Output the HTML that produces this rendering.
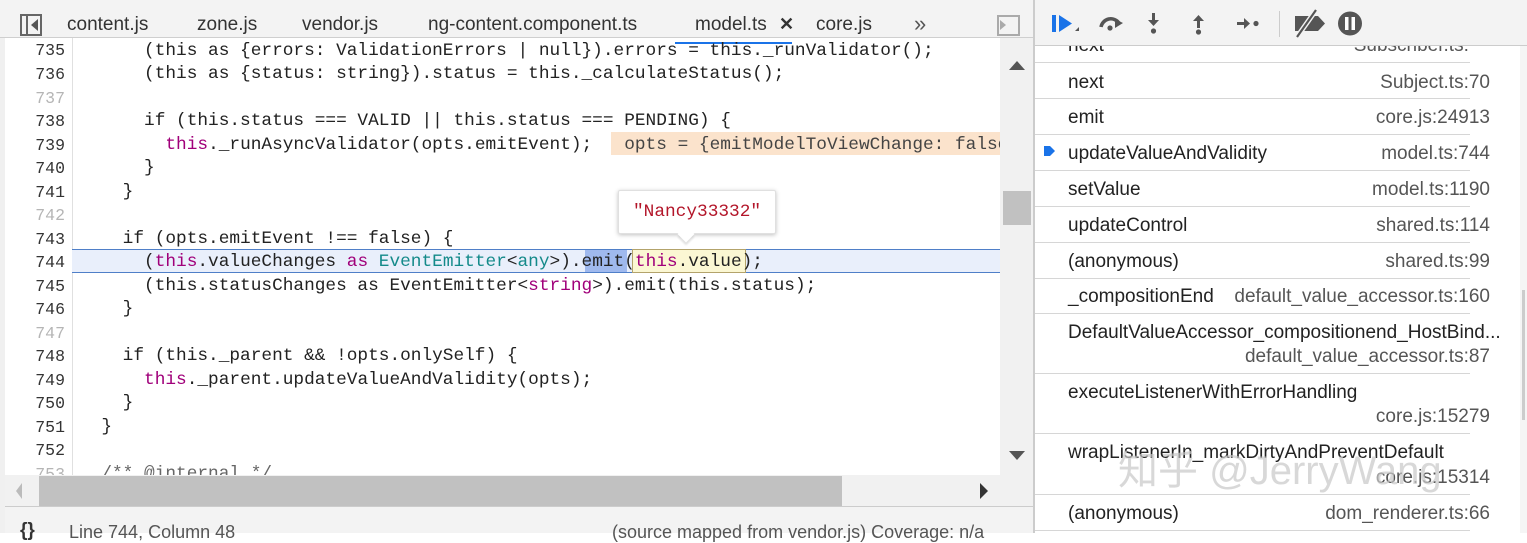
<!DOCTYPE html>
<html><head><meta charset="utf-8"><style>
*{margin:0;padding:0;box-sizing:border-box}
body{width:1527px;height:533px;overflow:hidden;background:#fff;position:relative;font-family:"Liberation Sans",sans-serif}
.abs{position:absolute}
.tabs{left:0;top:0;width:1035px;height:38px;background:#f3f3f3;border-bottom:1px solid #cfcfcf}
.tab{position:absolute;top:14px;font-size:19px;color:#333}
.code{font-family:"Liberation Mono",monospace;font-size:17.8px;color:#222;white-space:pre}
.ln{position:absolute;left:0;width:65px;text-align:right;font-family:"Liberation Mono",monospace;font-size:16.5px;color:#333}
.ln.g{color:#b5b5b5}
.cl{position:absolute;left:80px}
.k{color:#a0007a}.t{color:#148a8a}
.row{position:absolute;left:1035px;width:435px;border-bottom:1px solid #d6d6d6;font-size:19px;color:#222}
.row .f{position:absolute;left:33px}
.row .l{position:absolute;right:-20px;color:#555}
</style></head><body>
<div class="abs tabs"></div>
<div class="abs" style="left:20px;top:14px;width:22px;height:22px;border:2px solid #666"></div>
<div class="abs" style="left:26px;top:15px;width:2px;height:19px;background:#666"></div>
<div class="abs" style="left:31px;top:19px;width:0;height:0;border-top:6px solid transparent;border-bottom:6px solid transparent;border-right:7px solid #555"></div>
<div class="tab" style="left:67px">content.js</div>
<div class="tab" style="left:197px">zone.js</div>
<div class="tab" style="left:302px">vendor.js</div>
<div class="tab" style="left:428px">ng-content.component.ts</div>
<div class="tab" style="left:695px">model.ts</div>
<div class="tab" style="left:779px;font-weight:bold;font-size:18px">✕</div>
<div class="tab" style="left:816px">core.js</div>
<div class="tab" style="left:914px;font-size:22px;top:11px;color:#555">»</div>
<div class="abs" style="left:675px;top:42px;width:117px;height:2px;background:#1a73e8"></div>
<div class="abs" style="left:997px;top:15px;width:23px;height:21px;border:2px solid #aaa"></div>
<div class="abs" style="left:1000px;top:20px;border-top:5px solid transparent;border-bottom:5px solid transparent;border-left:6px solid #aaa"></div>

<div class="abs" style="left:72px;top:38px;width:1px;height:437px;background:#e0e0e0"></div>
<div class="abs" style="left:0;top:38px;width:5px;height:495px;background:#f0f0f0"></div>

<div class="abs" style="left:72px;top:249px;width:928px;height:24px;background:#e9effb;border-top:1px solid #4f7fc8;border-bottom:1px solid #4f7fc8"></div>
<div class="abs" style="left:585px;top:250px;width:42px;height:22px;background:#9fb9ee"></div>
<div class="abs" style="left:632px;top:249px;width:114px;height:24px;background:#fbf7d3;border:1px solid #b3a36b"></div>
<div class="abs" style="left:611px;top:132px;width:389px;height:23px;background:#fbe3cc"></div>

<div class="code abs" style="left:0;top:38px;width:1000px;height:437px;overflow:hidden">
<div class="ln" style="top:3px">735</div><div class="cl" style="top:3px">      (this as {errors: ValidationErrors | null}).errors = this._runValidator();</div>
<div class="ln" style="top:27px">736</div><div class="cl" style="top:26px">      (this as {status: string}).status = this._calculateStatus();</div>
<div class="ln g" style="top:51px">737</div>
<div class="ln" style="top:74px">738</div><div class="cl" style="top:73px">      if (this.status === VALID || this.status === PENDING) {</div>
<div class="ln" style="top:98px">739</div><div class="cl" style="top:97px">        <span class="k">this</span>._runAsyncValidator(opts.emitEvent);  <span style="color:#444"> opts = {emitModelToViewChange: false</span></div>
<div class="ln" style="top:121px">740</div><div class="cl" style="top:120px">      }</div>
<div class="ln" style="top:145px">741</div><div class="cl" style="top:144px">    }</div>
<div class="ln g" style="top:168px">742</div>
<div class="ln" style="top:192px">743</div><div class="cl" style="top:191px">    if (opts.emitEvent !== false) {</div>
<div class="ln" style="top:215px">744</div><div class="cl" style="top:214px">      (<span class="k">this</span>.valueChanges <span class="k">as</span> <span class="t">EventEmitter</span>&lt;<span class="t">any</span>&gt;).emit(<span class="k">this</span>.value);</div>
<div class="ln" style="top:239px">745</div><div class="cl" style="top:238px">      (this.statusChanges as EventEmitter&lt;<span class="k">string</span>&gt;).emit(this.status);</div>
<div class="ln" style="top:262px">746</div><div class="cl" style="top:261px">    }</div>
<div class="ln g" style="top:286px">747</div>
<div class="ln" style="top:309px">748</div><div class="cl" style="top:308px">    if (this._parent &amp;&amp; !opts.onlySelf) {</div>
<div class="ln" style="top:333px">749</div><div class="cl" style="top:332px">      <span class="k">this</span>._parent.updateValueAndValidity(opts);</div>
<div class="ln" style="top:356px">750</div><div class="cl" style="top:355px">    }</div>
<div class="ln" style="top:380px">751</div><div class="cl" style="top:379px">  }</div>
<div class="ln" style="top:403px">752</div>
<div class="ln g" style="top:427px">753</div><div class="cl" style="top:426px;color:#666">  /** @internal */</div>
</div>

<div class="abs" style="left:618px;top:190px;width:158px;height:44px;background:#fff;border:1px solid #e0e0e0;box-shadow:0 1px 4px rgba(0,0,0,.25);border-radius:2px"></div>
<div class="abs" style="left:680px;top:228px;width:12px;height:12px;background:#fff;transform:rotate(45deg);box-shadow:2px 2px 2px rgba(0,0,0,.12)"></div>
<div class="abs code" style="left:633px;top:202px;color:#b3162a">"Nancy33332"</div>

<div class="abs" style="left:1000px;top:38px;width:33px;height:437px;background:#f1f1f1"></div>
<div class="abs" style="left:1009px;top:61px;border-left:8px solid transparent;border-right:8px solid transparent;border-bottom:9px solid #555"></div>
<div class="abs" style="left:1003px;top:191px;width:28px;height:34px;background:#c1c1c1"></div>
<div class="abs" style="left:1009px;top:451px;border-left:8px solid transparent;border-right:8px solid transparent;border-top:9px solid #555"></div>
<div class="abs" style="left:5px;top:475px;width:1028px;height:31px;background:#f1f1f1"></div>
<div class="abs" style="left:39px;top:476px;width:803px;height:30px;background:#c1c1c1"></div>
<div class="abs" style="left:16px;top:483px;border-top:8px solid transparent;border-bottom:8px solid transparent;border-right:6px solid #bbb"></div>
<div class="abs" style="left:980px;top:483px;border-top:8px solid transparent;border-bottom:8px solid transparent;border-left:8px solid #333"></div>
<div class="abs" style="left:5px;top:506px;width:1028px;height:27px;background:#f3f3f3;border-top:1px solid #ccc"></div>
<div class="abs" style="left:20px;top:520px;font-size:19px;color:#333;font-weight:bold">{}</div>
<div class="abs" style="left:69px;top:522px;font-size:18px;color:#555">Line 744, Column 48</div>
<div class="abs" style="left:612px;top:522px;font-size:18px;color:#555">(source mapped from vendor.js)  Coverage: n/a</div>

<div class="abs" style="left:1033px;top:0;width:2px;height:533px;background:#ccc"></div>

<div class="abs" style="left:1035px;top:0;width:492px;height:46px;background:#f3f3f3;border-bottom:1px solid #ccc"></div>
<svg class="abs" style="left:1035px;top:0" width="340" height="46" viewBox="0 0 340 46">
<rect x="17" y="15" width="4" height="17" fill="#1a73e8"/>
<path d="M24 15 L37 23.5 L24 32 Z" fill="#1a73e8"/>
<path d="M40 31 L44 31 L44 27 Z" fill="#555"/>
<path d="M66 27 A10 10 0 0 1 84 23" stroke="#555" stroke-width="3.5" fill="none"/>
<path d="M80 19 L88 23 L80 28 Z" fill="#555"/><circle cx="75" cy="28" r="2.6" fill="#555"/>
<rect x="117" y="13" width="3" height="9" fill="#555"/><path d="M113 20 L124 20 L118.5 26 Z" fill="#555"/><circle cx="118.5" cy="31" r="2.6" fill="#555"/>
<rect x="162" y="19" width="3" height="9" fill="#555"/><path d="M158 21 L169 21 L163.5 15 Z" fill="#555"/><circle cx="163.5" cy="32" r="2.6" fill="#555"/>
<rect x="202" y="22" width="8" height="3" fill="#555"/><path d="M209 18 L215 23.5 L209 29 Z" fill="#555"/><circle cx="221" cy="23.5" r="2.6" fill="#555"/>
<rect x="244" y="11" width="1" height="26" fill="#ccc"/>
<path d="M260 16 L283 16 L290 23.5 L283 31 L260 31 Z" fill="#555"/>
<path d="M262 37 L281 10" stroke="#f3f3f3" stroke-width="5"/><path d="M262 37 L281 10" stroke="#555" stroke-width="2.2"/>
<circle cx="315" cy="23.5" r="12" fill="#555"/><rect x="310" y="17" width="3.5" height="13" fill="#fff"/><rect x="316.5" y="17" width="3.5" height="13" fill="#fff"/>
</svg>

<div class="abs" style="left:1035px;top:46px;width:435px;height:487px;overflow:hidden">
<div class="abs" style="left:33px;top:-11px;font-size:19px;color:#222">next</div>
<div class="abs" style="right:-20px;top:-11px;font-size:19px;color:#555">Subscriber.ts:99</div>
</div>
<div class="abs" style="left:1035px;top:62px;width:435px;height:1px;background:#d6d6d6"></div>
<div class="row" style="top:63px;height:36px"><span class="f" style="top:9px">next</span><span class="l" style="top:9px">Subject.ts:70</span></div>
<div class="row" style="top:99px;height:36px"><span class="f" style="top:8px">emit</span><span class="l" style="top:8px">core.js:24913</span></div>
<div class="row" style="top:135px;height:36px"><span class="f" style="top:8px">updateValueAndValidity</span><span class="l" style="top:8px">model.ts:744</span></div>
<svg class="abs" style="left:1043px;top:144px" width="14" height="14"><path d="M1 2 L7 2 L12 7 L7 12 L1 12 Z" fill="#1a73e8"/></svg>
<div class="row" style="top:171px;height:36px"><span class="f" style="top:8px">setValue</span><span class="l" style="top:8px">model.ts:1190</span></div>
<div class="row" style="top:207px;height:36px"><span class="f" style="top:8px">updateControl</span><span class="l" style="top:8px">shared.ts:114</span></div>
<div class="row" style="top:243px;height:36px"><span class="f" style="top:8px">(anonymous)</span><span class="l" style="top:8px">shared.ts:99</span></div>
<div class="row" style="top:279px;height:35px"><span class="f" style="top:7px">_compositionEnd</span><span class="l" style="top:7px">default_value_accessor.ts:160</span></div>
<div class="row" style="top:314px;height:60px"><span class="f" style="top:8px;white-space:nowrap">DefaultValueAccessor_compositionend_HostBind...</span><span class="l" style="top:32px">default_value_accessor.ts:87</span></div>
<div class="row" style="top:374px;height:60px"><span class="f" style="top:8px">executeListenerWithErrorHandling</span><span class="l" style="top:32px">core.js:15279</span></div>
<div class="row" style="top:434px;height:61px"><span class="f" style="top:8px">wrapListenerIn_markDirtyAndPreventDefault</span><span class="l" style="top:33px">core.js:15314</span></div>
<div class="row" style="top:495px;height:36px"><span class="f" style="top:8px">(anonymous)</span><span class="l" style="top:8px">dom_renderer.ts:66</span></div>
<div class="abs" style="left:1118px;top:438px;font-size:40px;color:rgba(200,200,200,.7);font-family:'Liberation Sans','Noto Sans CJK SC',sans-serif;white-space:nowrap">知乎 @JerryWang</div>
<div class="abs" style="left:1520px;top:46px;width:7px;height:487px;background:#f5f5f5"></div>
<div class="abs" style="left:1522px;top:290px;width:3px;height:130px;background:#ccc"></div>
</body></html>
